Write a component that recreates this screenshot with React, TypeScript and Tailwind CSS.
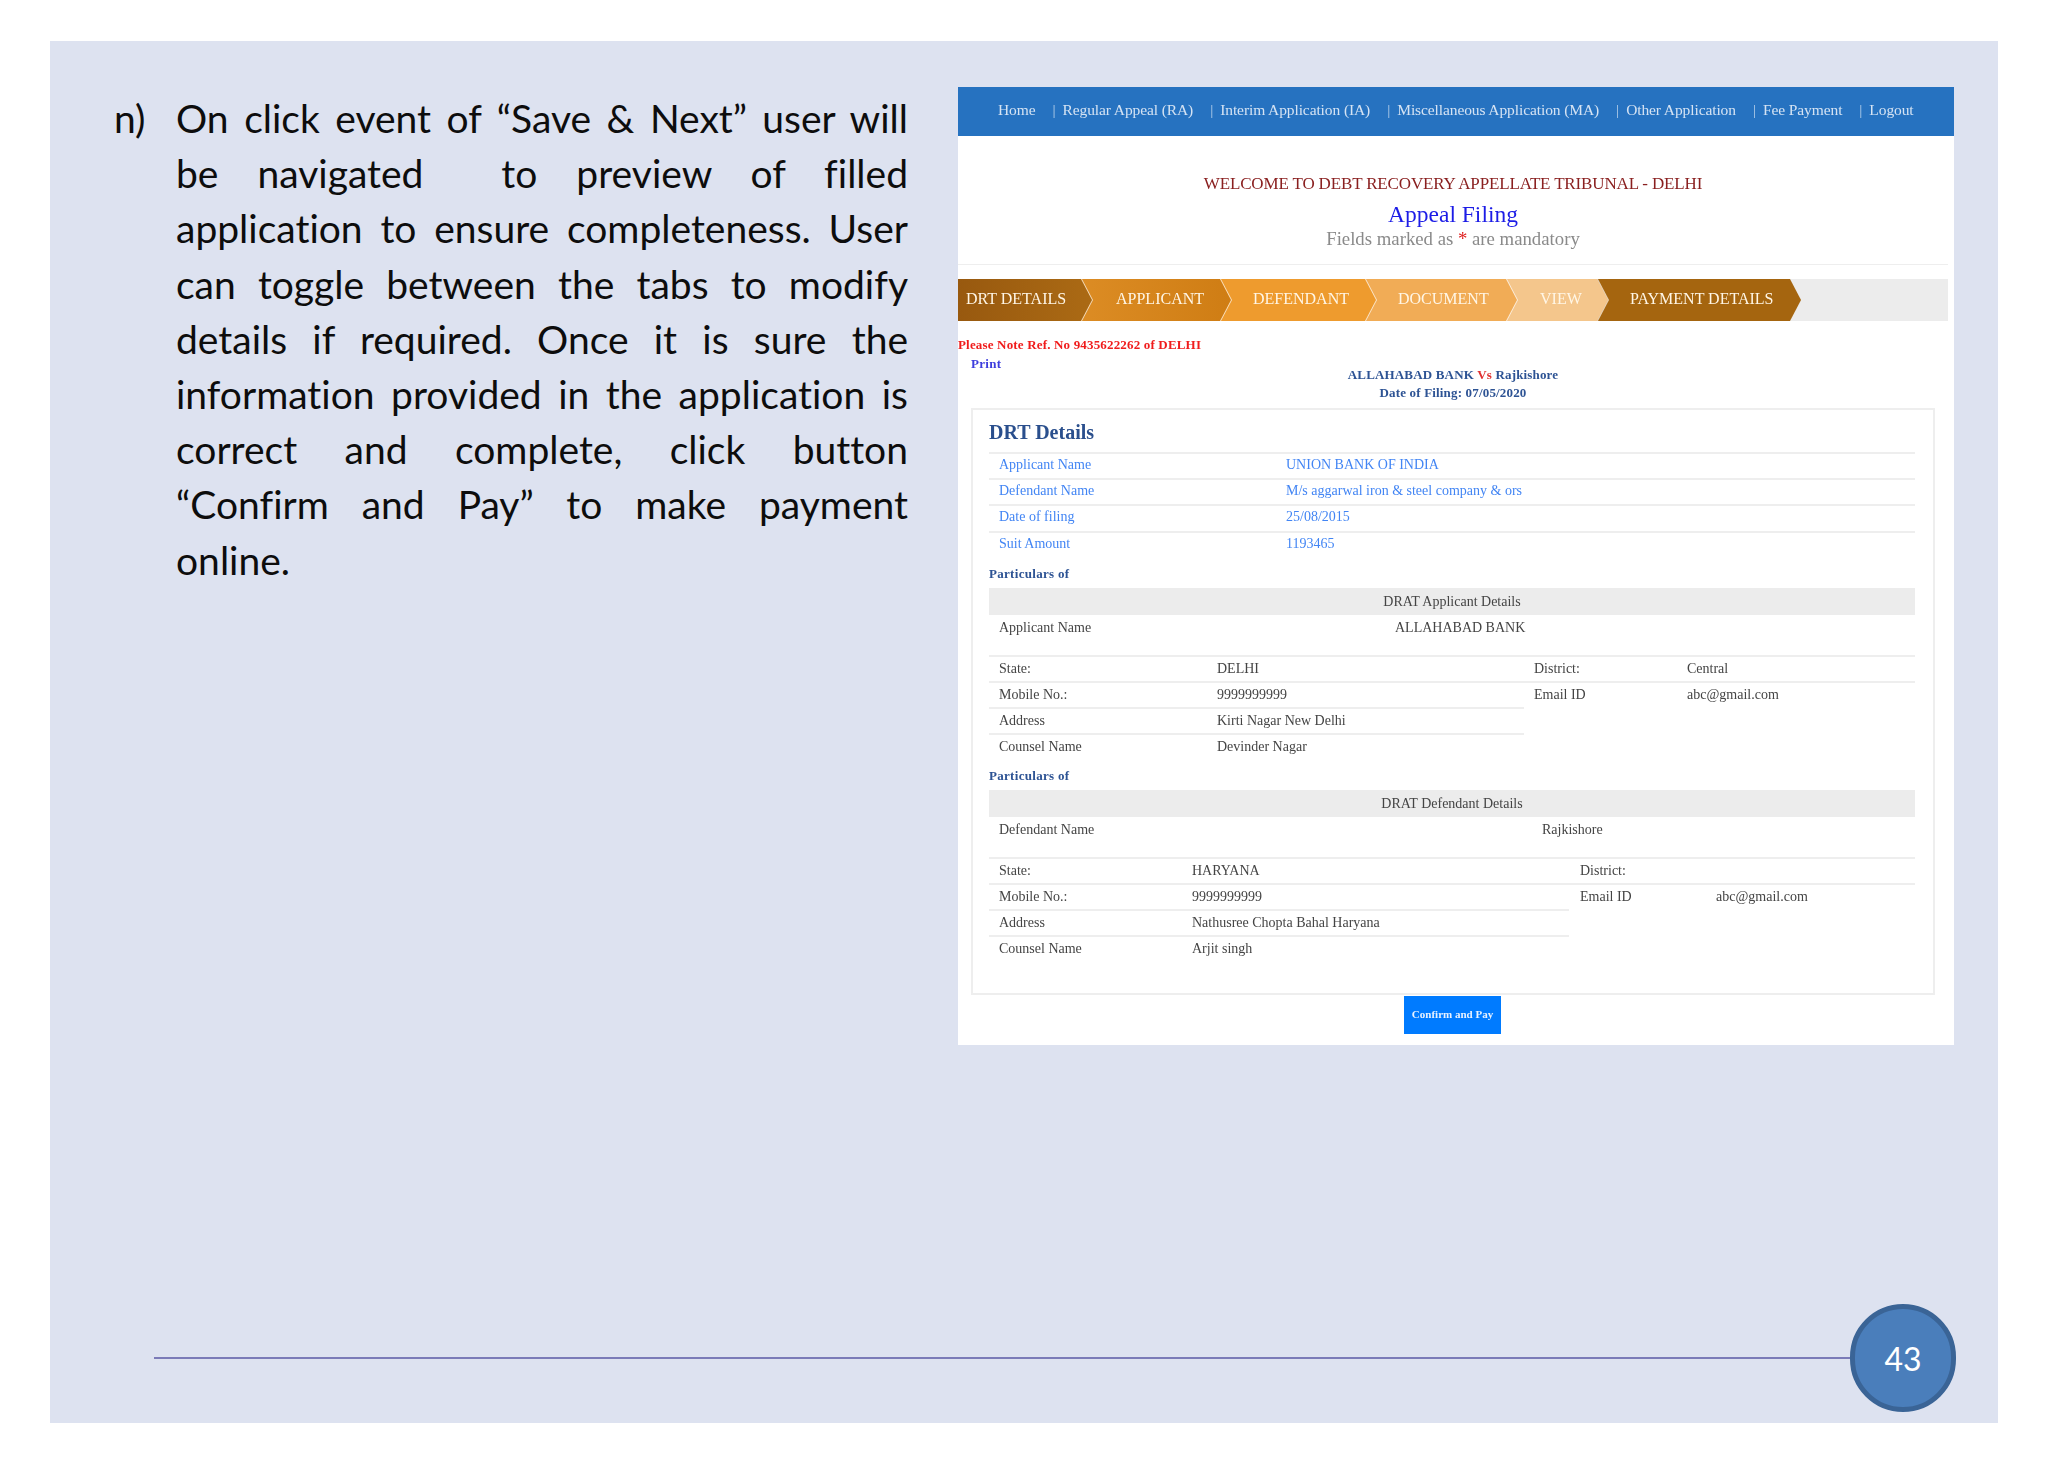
const serif = "font-['Liberation_Serif',serif]";

const lines = [
  "On click event of “Save & Next” user will",
  "be navigated \u00a0to preview of filled",
  "application to ensure completeness. User",
  "can toggle between the tabs to modify",
  "details if required. Once it is sure the",
  "information provided in the application is",
  "correct and complete, click button",
  "“Confirm and Pay” to make payment",
];

const navItems = ["Regular Appeal (RA)", "Interim Application (IA)", "Miscellaneous Application (MA)", "Other Application", "Fee Payment", "Logout"];

const steps = [
  { t: "DRT DETAILS", o: "w-[134px] z-[6] [filter:drop-shadow(1.5px_0_0_rgba(255,255,255,0.7))]", c: "pl-[8px] bg-[linear-gradient(90deg,#98590f,#ab6a14)]" },
  { t: "APPLICANT", o: "w-[150px] -ml-[11px] z-[5] [filter:drop-shadow(1.5px_0_0_rgba(255,255,255,0.7))]", c: "pl-[35px] bg-[linear-gradient(90deg,#dc8c24,#cf7d14)]" },
  { t: "DEFENDANT", o: "w-[156px] -ml-[11px] z-[4] [filter:drop-shadow(1.5px_0_0_rgba(255,255,255,0.7))]", c: "pl-[33px] bg-[#ee9b2e]" },
  { t: "DOCUMENT", o: "w-[152px] -ml-[11px] z-[3] [filter:drop-shadow(1.5px_0_0_rgba(255,255,255,0.7))]", c: "pl-[33px] bg-[#f1ac56]" },
  { t: "VIEW", o: "w-[103px] -ml-[12px] z-[2] [filter:drop-shadow(1.5px_0_0_rgba(255,255,255,0.7))]", c: "pl-[35px] bg-[#f4c68c]" },
  { t: "PAYMENT DETAILS", o: "w-[204px] -ml-[11px] z-[1]", c: "pl-[33px] bg-[#a5650f]" },
];

function BlueRow({ label, value }: { label: string; value: string }) {
  return (
    <div className="flex h-[26.2px] items-center border-t-2 border-[#eeeeee] pb-[3px] pl-[10px] text-[14px] text-[#4285f4]">
      <span className="w-[287px]">{label}</span>
      <span>{value}</span>
    </div>
  );
}

function Party({
  line,
  label,
  value,
  label2,
  value2,
  a,
  b,
  c,
}: {
  line: string;
  label: string;
  value: string;
  label2?: string;
  value2?: string;
  a: string;
  b: string;
  c: string;
}) {
  return (
    <div className="relative flex h-[26px] items-center pl-[10px] pt-[2px] text-[14px] text-[#444444]">
      <div className={`absolute left-0 top-0 h-[2px] bg-[#eeeeee] ${line}`} />
      <span className={a}>{label}</span>
      <span className={b}>{value}</span>
      {label2 && <span className={c}>{label2}</span>}
      {value2 && <span>{value2}</span>}
    </div>
  );
}

function Section({
  band,
  name,
  nameValue,
  nameClass,
  rows,
  a,
  b,
  c,
  shortLine,
}: {
  band: string;
  name: string;
  nameValue: string;
  nameClass: string;
  rows: { l: string; v: string; l2?: string; v2?: string }[];
  a: string;
  b: string;
  c: string;
  shortLine: string;
}) {
  return (
    <>
      <div className="mt-[8.5px] text-[13px] font-bold leading-[18px] tracking-[0.3px] text-[#2d5394]">Particulars of</div>
      <div className="mt-[4.5px] flex h-[27px] items-center justify-center bg-[#ececec] text-[14px] text-[#444444]">{band}</div>
      <div className="flex h-[40px] items-start pl-[10px] pt-[1px] text-[14px] leading-[24px] text-[#444444]">
        <span className={nameClass}>{name}</span>
        <span>{nameValue}</span>
      </div>
      {rows.map((r, i) => (
        <Party key={r.l} line={i < 2 ? "w-full" : shortLine} label={r.l} value={r.v} label2={r.l2} value2={r.v2} a={a} b={b} c={c} />
      ))}
    </>
  );
}

function Card() {
  return (
    <div className={`h-[958px] w-[996px] shrink-0 bg-white blur-[0.35px] ${serif}`}>
      <nav className="flex h-[49px] items-center bg-[#2672c0] pb-[3px] pl-[40px] text-[15.5px] tracking-[-0.1px] text-[#d5e3f3]">
        <span>Home</span>
        {navItems.map((n) => (
          <span key={n} className="flex items-center">
            <span className="ml-[17px] mr-[7px] font-light text-[#b8d0ea]">|</span>
            {n}
          </span>
        ))}
      </nav>
      <div className="w-[990px]">
        <div className="mt-[36px] text-center text-[17px] leading-[24px] tracking-[-0.15px] text-[#8a2020]">WELCOME TO DEBT RECOVERY APPELLATE TRIBUNAL - DELHI</div>
        <div className="mt-[5px] text-center text-[23.5px] leading-[26px] text-[#1c1ce6]">Appeal Filing</div>
        <div className="mt-[1px] text-center text-[18.75px] leading-[22px] text-[#8a8a8a]">
          Fields marked as <span className="text-[#e02020]">*</span> are mandatory
        </div>
        <div className="mt-[14px] h-[1px] bg-[#eeeeee]" />
        <div className="mt-[14px] flex h-[42px] bg-[#ececec]">
          {steps.map((s) => (
            <div key={s.t} className={`relative h-full ${s.o}`}>
              <div className={`flex h-full items-center pb-[2px] text-[16px] text-[#fff6e6] [clip-path:polygon(0_0,calc(100%-11px)_0,100%_50%,calc(100%-11px)_100%,0_100%)] ${s.c}`}>
                {s.t}
              </div>
            </div>
          ))}
        </div>
      </div>
      <div className="mt-[15px] text-[13px] font-bold leading-[18px] tracking-[0.17px] text-[#f01c1c]">Please Note Ref. No 9435622262 of DELHI</div>
      <div className="ml-[13px] mt-[1px] text-[13px] font-bold leading-[18px] tracking-[0.3px] text-[#3d3ddd]">Print</div>
      <div className="-mt-[7px] w-[990px] text-center text-[13px] font-bold tracking-[0.17px] text-[#2d5394]">
        <div className="leading-[18px]">
          ALLAHABAD BANK <span className="text-[#e03030]">Vs</span> Rajkishore
        </div>
        <div className="leading-[17px]">Date of Filing: 07/05/2020</div>
      </div>
      <div className="ml-[13px] mt-[7px] h-[587px] w-[964px] border-2 border-[#eeeeee] pl-[16px] pr-[18px]">
        <div className="mb-[6px] mt-[8px] text-[20px] font-bold leading-[28px] text-[#2a4f8d]">DRT Details</div>
        <BlueRow label="Applicant Name" value="UNION BANK OF INDIA" />
        <BlueRow label="Defendant Name" value="M/s aggarwal iron & steel company & ors" />
        <BlueRow label="Date of filing" value="25/08/2015" />
        <BlueRow label="Suit Amount" value="1193465" />
        <Section
          band="DRAT Applicant Details"
          name="Applicant Name"
          nameValue="ALLAHABAD BANK"
          nameClass="w-[396px]"
          a="w-[218px]"
          b="w-[317px]"
          c="w-[153px]"
          shortLine="w-[535px]"
          rows={[
            { l: "State:", v: "DELHI", l2: "District:", v2: "Central" },
            { l: "Mobile No.:", v: "9999999999", l2: "Email ID", v2: "abc@gmail.com" },
            { l: "Address", v: "Kirti Nagar New Delhi" },
            { l: "Counsel Name", v: "Devinder Nagar" },
          ]}
        />
        <Section
          band="DRAT Defendant Details"
          name="Defendant Name"
          nameValue="Rajkishore"
          nameClass="w-[543px]"
          a="w-[193px]"
          b="w-[388px]"
          c="w-[136px]"
          shortLine="w-[580px]"
          rows={[
            { l: "State:", v: "HARYANA", l2: "District:" },
            { l: "Mobile No.:", v: "9999999999", l2: "Email ID", v2: "abc@gmail.com" },
            { l: "Address", v: "Nathusree Chopta Bahal Haryana" },
            { l: "Counsel Name", v: "Arjit singh" },
          ]}
        />
      </div>
      <div className="ml-[446px] mt-[1px] flex h-[38px] w-[97px] items-center justify-center bg-[#007bff] pb-[2px] text-[11px] font-bold text-[#e8f2ff]">Confirm and Pay</div>
    </div>
  );
}

export default function App() {
  return (
    <div className="h-[1463px] w-[2048px] overflow-hidden bg-white pl-[50px] pt-[41px]">
      <div className="flex h-[1382px] w-[1948px] flex-col bg-[#dde2f0]">
        <div className="flex flex-1 pt-[46px]">
          <div className="ml-[64px] flex w-[794px] shrink-0 pt-[4px] font-['Lato',sans-serif] text-[39px] leading-[55.2px] text-[#0d0d0d] [font-variant-ligatures:none]">
            <span className="w-[62px] shrink-0">n)</span>
            <div className="w-[732px]">
              {lines.map((l) => (
                <div key={l} className="whitespace-pre-wrap text-justify [text-align-last:justify]">{l}</div>
              ))}
              <div>online.</div>
            </div>
          </div>
          <div className="ml-[50px]">
            <Card />
          </div>
        </div>
        <div className="flex items-center pb-[11px] pl-[104px] pr-[42px]">
          <div className="h-[2px] flex-1 bg-[#7b7bb8]" />
          <div className="flex h-[108px] w-[106px] shrink-0 items-center justify-center rounded-full border-[5px] border-[#3a6496] bg-[#4a7ebb] pt-[2px] font-['Lato',sans-serif] text-[32px] text-white">43</div>
        </div>
      </div>
    </div>
  );
}
